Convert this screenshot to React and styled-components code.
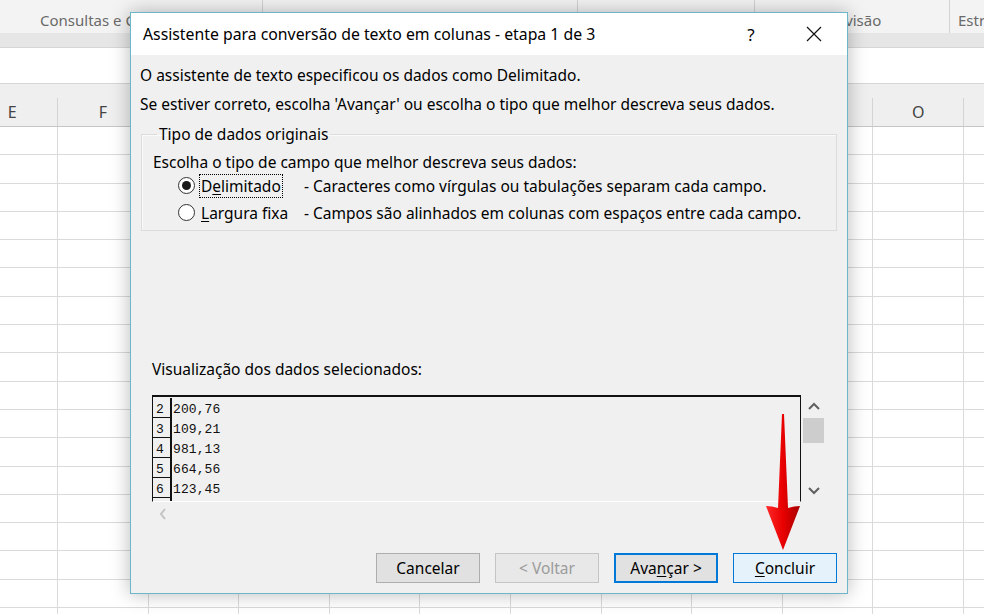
import React from 'react';
import styled, { createGlobalStyle } from 'styled-components';

const GlobalStyle = createGlobalStyle`
    html, body {
        margin: 0;
        padding: 0;
        background: #ffffff;
    }
    body {
        font-family: 'Noto Sans', 'Open Sans', sans-serif;
    }
`;

const UI_FONT = `'Noto Sans', 'Open Sans', sans-serif`;
const COL_W = 90.6;
const ROW_H = 28.3;

// ---------- planilha ao fundo ----------

const Screen = styled.div`
    position: relative;
    width: 984px;
    height: 614px;
    overflow: hidden;
    background: #ffffff;
    font-family: ${UI_FONT};
`;

const GroupStrip = styled.div`
    display: flex;
    height: 33px;
    background: #f3f3f3;
`;

const Group = styled.div`
    flex: 0 0 ${p => p.$w}px;
    box-sizing: border-box;
    border-right: 1px solid #d2d2d2;
    padding-left: ${p => p.$pad || 0}px;
    font-size: 15px;
    line-height: 40px;
    color: #6a6a6a;
    white-space: nowrap;
    overflow: hidden;
`;

const Band = styled.div`
    height: 14px;
    background: #e6e6e6;
    border-bottom: 1px solid #d6d6d6;
`;

const FormulaArea = styled.div`
    height: 35px;
    background: #ffffff;
    border-bottom: 1px solid #d6d6d6;
`;

const HeaderRow = styled.div`
    display: flex;
    height: 42px;
    margin-left: -32.6px;
    background: #efefef;
    border-bottom: 1px solid #c6c6c6;
`;

const HeaderCell = styled.div`
    flex: 0 0 ${COL_W}px;
    box-sizing: border-box;
    margin-top: 14px;
    border-right: 1px solid #d4d4d4;
    text-align: center;
    font-size: 16px;
    line-height: 28px;
    color: #444;
`;

const GridRow = styled.div`
    display: flex;
    height: ${ROW_H}px;
    margin-left: -32.6px;
    box-sizing: border-box;
    border-bottom: 1px solid #dadada;
`;

const GridCell = styled.div`
    flex: 0 0 ${COL_W}px;
    box-sizing: border-box;
    border-right: 1px solid #dadada;
`;

// ---------- caixa de diálogo ----------

const Dialog = styled.div`
    position: absolute;
    left: 130px;
    top: 12px;
    width: 718px;
    height: 582px;
    box-sizing: border-box;
    border: 1px solid #6db5c9;
    background: #f0f0f0;
    box-shadow: 0 0 18px rgba(0, 0, 0, 0.28);
    display: flex;
    flex-direction: column;
    font-family: ${UI_FONT};
    color: #000;
`;

const TitleBar = styled.div`
    display: flex;
    align-items: center;
    height: 42px;
    background: #ffffff;
    padding-left: 12px;
    padding-right: 10px;
`;

const TitleText = styled.div`
    flex: 1;
    font-size: 15.8px;
    white-space: nowrap;
`;

const TitleButton = styled.div`
    width: 46px;
    height: 42px;
    display: flex;
    align-items: center;
    justify-content: center;
    margin-left: ${p => p.$gap || 0}px;
    font-size: 17px;
`;

const Body = styled.div`
    flex: 1;
    display: flex;
    flex-direction: column;
    padding: 0 10px 10px 9px;
    font-size: 15.5px;
`;

const Para = styled.div`
    line-height: 20px;
    margin-top: ${p => p.$top}px;
    margin-left: ${p => p.$left || 0}px;
    white-space: nowrap;
`;

const GroupBox = styled.fieldset`
    margin: 10px 0 0 1px;
    padding: 0 0 4px 11px;
    border: 1px solid #dcdcdc;
    box-shadow: inset 1px 1px 0 #fafafa;
    min-width: 0;
`;

const Legend = styled.legend`
    line-height: 20px;
    padding: 0 2px;
    margin-left: 4px;
`;

const OptionRow = styled.div`
    display: flex;
    align-items: center;
    height: 27px;
    white-space: nowrap;
`;

const Radio = styled.span`
    flex: 0 0 auto;
    width: 17px;
    height: 17px;
    box-sizing: border-box;
    margin-left: 25px;
    border: 1px solid #333;
    border-radius: 50%;
    background: #fff;
    display: flex;
    align-items: center;
    justify-content: center;
    &::after {
        content: '';
        display: ${p => (p.$on ? 'block' : 'none')};
        width: 9px;
        height: 9px;
        border-radius: 50%;
        background: #1a1a1a;
    }
`;

const OptionName = styled.span`
    flex: 0 0 auto;
    width: 103px;
    margin-left: 6px;
    box-sizing: border-box;
    line-height: 20px;
`;

const Focus = styled.span`
    outline: 1px dotted #000;
    outline-offset: 0;
    padding: 0 1px;
    margin-left: -1px;
`;

const Key = styled.span`
    text-decoration: underline;
    text-underline-offset: 2px;
`;

const Spacer = styled.div`
    flex: 1;
`;

const Preview = styled.div`
    display: flex;
    margin-left: 12px;
    margin-top: 16px;
    width: 674px;
`;

const PreviewMain = styled.div`
    flex: 0 0 649px;
    display: flex;
    flex-direction: column;
`;

const DataArea = styled.div`
    height: 107px;
    box-sizing: border-box;
    border-top: 2px solid #111;
    border-left: 1px solid #111;
    border-right: 1px solid #111;
    border-bottom: 1px solid #fff;
    overflow: hidden;
    padding-top: 1px;
`;

const DataRow = styled.div`
    display: flex;
    height: 20px;
    font-family: 'Liberation Mono', 'Courier New', monospace;
    font-size: 13px;
    line-height: 23px;
    color: #111;
`;

const RowNum = styled.div`
    flex: 0 0 19px;
    box-sizing: border-box;
    border-right: 2px solid #111;
    border-bottom: 1px solid #111;
    padding-left: 3px;
`;

const RowValue = styled.div`
    padding-left: 1px;
    letter-spacing: 0.1px;
`;

const HScroll = styled.div`
    height: 23px;
    display: flex;
    align-items: center;
    padding-left: 7px;
`;

const VScroll = styled.div`
    flex: 0 0 25px;
    height: 107px;
    display: flex;
    flex-direction: column;
    align-items: center;
`;

const Arrow = styled.div`
    height: 23px;
    display: flex;
    align-items: center;
    justify-content: center;
`;

const Thumb = styled.div`
    width: 21px;
    height: 25px;
    background: #cdcdcd;
`;

const Buttons = styled.div`
    display: flex;
    justify-content: flex-end;
    gap: 15px;
    margin-top: 28px;
`;

const Button = styled.div`
    width: 104px;
    height: 30px;
    box-sizing: border-box;
    display: flex;
    align-items: center;
    justify-content: center;
    border: ${p => (p.$default ? '2px solid #0078d7' : p.$hover ? '1px solid #0078d7' : p.$disabled ? '1px solid #c4c4c4' : '1px solid #adadad')};
    background: ${p => (p.$hover ? '#e5f1fb' : p.$disabled ? '#e8e8e8' : '#e1e1e1')};
    color: ${p => (p.$disabled ? '#9c9c9c' : '#000')};
`;

const RedArrow = styled.svg`
    position: absolute;
    left: 760px;
    top: 410px;
`;

// só as letras que ficam fora da caixa de diálogo
const headers = ['E', 'F', '', '', '', '', '', '', '', '', 'O', ''];
const previewRows = [
    ['2', '200,76'],
    ['3', '109,21'],
    ['4', '981,13'],
    ['5', '664,56'],
    ['6', '123,45'],
    ['', '']
];

function Chevron({ dir, color }) {
    const d = {
        up: 'M1 7 L6 2 L11 7',
        down: 'M1 2 L6 7 L11 2',
        left: 'M6 1 L2 6 L6 11'
    }[dir];
    const w = dir === 'left' ? 8 : 12;
    const h = dir === 'left' ? 12 : 9;
    return (
        <svg width={w} height={h} viewBox={`0 0 ${w} ${h}`}>
            <path d={d} fill="none" stroke={color} strokeWidth="2" />
        </svg>
    );
}

export default function App() {
    return (
        <Screen>
            <GlobalStyle />
            <GroupStrip>
                <Group $w={263} $pad={40}>Consultas e Conexões</Group>
                <Group $w={315} />
                <Group $w={177} />
                <Group $w={195} $pad={67}>Previsão</Group>
                <Group $w={60} $pad={8}>Estrutura de Tópicos</Group>
            </GroupStrip>
            <Band />
            <FormulaArea />
            <HeaderRow>
                {headers.map((h, i) => (
                    <HeaderCell key={i}>{h}</HeaderCell>
                ))}
            </HeaderRow>
            {Array.from({ length: 18 }).map((_, r) => (
                <GridRow key={r}>
                    {headers.map((h, i) => (
                        <GridCell key={i} />
                    ))}
                </GridRow>
            ))}

            <Dialog>
                <TitleBar>
                    <TitleText>Assistente para conversão de texto em colunas - etapa 1 de 3</TitleText>
                    <TitleButton>?</TitleButton>
                    <TitleButton $gap={17}>
                        <svg width="16" height="16" viewBox="0 0 16 16">
                            <path d="M1 1 L15 15 M15 1 L1 15" stroke="#111" strokeWidth="1.2" />
                        </svg>
                    </TitleButton>
                </TitleBar>
                <Body>
                    <Para $top={10}>O assistente de texto especificou os dados como Delimitado.</Para>
                    <Para $top={9}>Se estiver correto, escolha 'Avançar' ou escolha o tipo que melhor descreva seus dados.</Para>
                    <GroupBox>
                        <Legend>Tipo de dados originais</Legend>
                        <Para $top={8}>Escolha o tipo de campo que melhor descreva seus dados:</Para>
                        <OptionRow>
                            <Radio $on />
                            <OptionName>
                                <Focus>
                                    D<Key>e</Key>limitado
                                </Focus>
                            </OptionName>
                            - Caracteres como vírgulas ou tabulações separam cada campo.
                        </OptionRow>
                        <OptionRow>
                            <Radio />
                            <OptionName>
                                <Key>L</Key>argura fixa
                            </OptionName>
                            - Campos são alinhados em colunas com espaços entre cada campo.
                        </OptionRow>
                    </GroupBox>
                    <Spacer />
                    <Para $top={0} $left={12}>Visualização dos dados selecionados:</Para>
                    <Preview>
                        <PreviewMain>
                            <DataArea>
                                {previewRows.map(([n, v], i) => (
                                    <DataRow key={i}>
                                        <RowNum>{n}</RowNum>
                                        <RowValue>{v}</RowValue>
                                    </DataRow>
                                ))}
                            </DataArea>
                            <HScroll>
                                <Chevron dir="left" color="#c2c2c2" />
                            </HScroll>
                        </PreviewMain>
                        <VScroll>
                            <Arrow>
                                <Chevron dir="up" color="#606060" />
                            </Arrow>
                            <Thumb />
                            <Spacer />
                            <Arrow>
                                <Chevron dir="down" color="#606060" />
                            </Arrow>
                        </VScroll>
                    </Preview>
                    <Buttons>
                        <Button>Cancelar</Button>
                        <Button $disabled>&lt; Voltar</Button>
                        <Button $default>
                            Ava<Key>n</Key>çar &gt;
                        </Button>
                        <Button $hover>
                            <Key>C</Key>oncluir
                        </Button>
                    </Buttons>
                </Body>
            </Dialog>

            <RedArrow width="46" height="145" viewBox="0 0 46 145">
                <defs>
                    <linearGradient id="redShade" x1="0" y1="0" x2="1" y2="0">
                        <stop offset="0" stopColor="#ff2a2a" />
                        <stop offset="0.5" stopColor="#e80000" />
                        <stop offset="1" stopColor="#a80000" />
                    </linearGradient>
                </defs>
                <path
                    d="M22 4 L24 4 L28 98 Q34 96 40 96 L23 140 L6 96 Q12 96 18 98 Z"
                    fill="url(#redShade)"
                />
            </RedArrow>
        </Screen>
    );
}
